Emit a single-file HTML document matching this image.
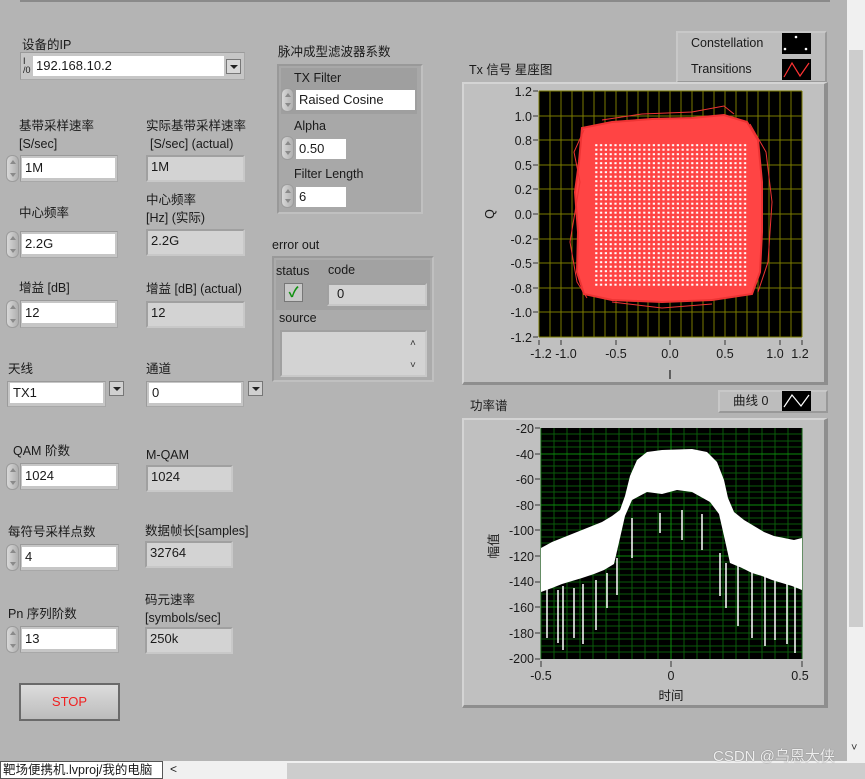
<!DOCTYPE html>
<html><head><meta charset="utf-8"><style>
*{margin:0;padding:0;box-sizing:border-box}
body{width:865px;height:779px;background:#b4b4b4;position:relative;overflow:hidden;font-family:"Liberation Sans","Noto Sans CJK SC",sans-serif;font-size:12.5px;color:#1a1a1a}
.a{position:absolute;white-space:nowrap}
.lbl{position:absolute;white-space:nowrap;line-height:16px}
.fr{position:absolute;background:#c6c6c6;border:1px solid #a8a8a8;border-top-color:#9a9a9a;border-left-color:#9a9a9a}
.in{position:absolute;background:#fff;line-height:20px;padding-left:3px;font-size:13px}
.ind{position:absolute;background:#d3d3d3;line-height:20px;padding-left:3px;font-size:13px;border-top:2px solid #a0a0a0;border-left:2px solid #a0a0a0;border-right:2px solid #c8c8c8;border-bottom:2px solid #c8c8c8}
.sp{position:absolute;width:13px;border-radius:6px;background:linear-gradient(90deg,#d8d8d8,#b0b0b0);border:1px solid #9c9c9c}
.sp:before,.sp:after{content:"";position:absolute;left:3px;border-left:3px solid transparent;border-right:3px solid transparent}
.sp:before{top:4px;border-bottom:4px solid #8a8a8a}
.sp:after{bottom:4px;border-top:4px solid #8a8a8a}
.dd{position:absolute;width:15px;height:15px;background:#d0d0d0;border:1px solid #777}
.dd:after{content:"";position:absolute;left:3px;top:5px;border-left:4px solid transparent;border-right:4px solid transparent;border-top:4px solid #222}
</style></head><body>
<div class="a" style="left:20px;top:0;width:810px;height:2px;background:#8a8a8a"></div>

<div class="lbl" style="left:22px;top:37px">设备的IP</div>
<div class="fr" style="left:20px;top:52px;width:225px;height:28px"></div>
<div class="a" style="left:23px;top:57px;font-size:9px;line-height:9px">I<br>/0</div>
<div class="in" style="left:33px;top:56px;width:191px;height:20px">192.168.10.2</div>
<div class="dd" style="left:226px;top:59px;background:#d8d8d8"></div>

<div class="lbl" style="left:19px;top:118px">基带采样速率</div>
<div class="lbl" style="left:19px;top:136px">[S/sec]</div>
<div class="sp" style="left:6px;top:155px;height:27px"></div>
<div class="fr" style="left:20px;top:155px;width:98px;height:27px"></div>
<div class="in" style="left:22px;top:158px;width:93px">1M</div>
<div class="lbl" style="left:146px;top:118px">实际基带采样速率</div>
<div class="lbl" style="left:150px;top:136px">[S/sec] (actual)</div>
<div class="ind" style="left:146px;top:155px;width:99px;height:27px">1M</div>

<div class="lbl" style="left:19px;top:205px">中心频率</div>
<div class="sp" style="left:6px;top:231px;height:27px"></div>
<div class="fr" style="left:20px;top:231px;width:98px;height:27px"></div>
<div class="in" style="left:22px;top:234px;width:93px">2.2G</div>
<div class="lbl" style="left:146px;top:192px">中心频率</div>
<div class="lbl" style="left:146px;top:210px">[Hz] (实际)</div>
<div class="ind" style="left:146px;top:229px;width:99px;height:27px">2.2G</div>

<div class="lbl" style="left:19px;top:280px">增益 [dB]</div>
<div class="sp" style="left:6px;top:300px;height:28px"></div>
<div class="fr" style="left:20px;top:300px;width:98px;height:28px"></div>
<div class="in" style="left:22px;top:303px;width:93px">12</div>
<div class="lbl" style="left:146px;top:281px">增益 [dB] (actual)</div>
<div class="ind" style="left:146px;top:301px;width:99px;height:27px">12</div>

<div class="lbl" style="left:8px;top:361px">天线</div>
<div class="fr" style="left:7px;top:381px;width:99px;height:26px"></div>
<div class="in" style="left:10px;top:383px;width:93px">TX1</div>
<div class="dd" style="left:109px;top:381px"></div>
<div class="lbl" style="left:146px;top:361px">通道</div>
<div class="fr" style="left:146px;top:381px;width:98px;height:26px"></div>
<div class="in" style="left:149px;top:383px;width:92px">0</div>
<div class="dd" style="left:248px;top:381px"></div>

<div class="lbl" style="left:13px;top:443px">QAM 阶数</div>
<div class="sp" style="left:6px;top:463px;height:27px"></div>
<div class="fr" style="left:20px;top:463px;width:99px;height:27px"></div>
<div class="in" style="left:22px;top:466px;width:94px">1024</div>
<div class="lbl" style="left:146px;top:447px">M-QAM</div>
<div class="ind" style="left:146px;top:465px;width:87px;height:27px">1024</div>

<div class="lbl" style="left:8px;top:524px">每符号采样点数</div>
<div class="sp" style="left:6px;top:544px;height:27px"></div>
<div class="fr" style="left:20px;top:544px;width:99px;height:27px"></div>
<div class="in" style="left:22px;top:547px;width:94px">4</div>
<div class="lbl" style="left:145px;top:523px">数据帧长[samples]</div>
<div class="ind" style="left:145px;top:541px;width:88px;height:27px">32764</div>

<div class="lbl" style="left:8px;top:606px">Pn 序列阶数</div>
<div class="sp" style="left:6px;top:626px;height:27px"></div>
<div class="fr" style="left:20px;top:626px;width:99px;height:27px"></div>
<div class="in" style="left:22px;top:629px;width:94px">13</div>
<div class="lbl" style="left:145px;top:592px">码元速率</div>
<div class="lbl" style="left:145px;top:610px">[symbols/sec]</div>
<div class="ind" style="left:145px;top:627px;width:88px;height:27px">250k</div>

<div class="a" style="left:19px;top:683px;width:101px;height:38px;border:2px solid #6a6a6a;background:linear-gradient(#dcdcdc,#bcbcbc);color:#f02020;text-align:center;line-height:34px;font-size:13px">STOP</div>

<div class="lbl" style="left:278px;top:44px">脉冲成型滤波器系数</div>
<div class="a" style="left:277px;top:64px;width:146px;height:150px;background:#a8a8a8;border:2px solid #c0c0c0;border-top-color:#999;border-left-color:#999"></div>
<div class="a" style="left:281px;top:68px;width:136px;height:46px;background:#9f9f9f"></div>
<div class="lbl" style="left:294px;top:70px">TX Filter</div>
<div class="sp" style="left:281px;top:88px;height:24px"></div>
<div class="in" style="left:296px;top:90px;width:119px">Raised Cosine</div>
<div class="lbl" style="left:294px;top:118px">Alpha</div>
<div class="sp" style="left:281px;top:136px;height:24px"></div>
<div class="in" style="left:296px;top:139px;width:50px">0.50</div>
<div class="lbl" style="left:294px;top:166px">Filter Length</div>
<div class="sp" style="left:281px;top:184px;height:24px"></div>
<div class="in" style="left:296px;top:187px;width:50px">6</div>

<div class="lbl" style="left:272px;top:237px">error out</div>
<div class="a" style="left:272px;top:256px;width:162px;height:126px;background:#ababab;border:2px solid #c0c0c0;border-top-color:#999;border-left-color:#999"></div>
<div class="a" style="left:276px;top:260px;width:154px;height:50px;background:#a2a2a2"></div>
<div class="lbl" style="left:276px;top:263px">status</div>
<div class="a" style="left:284px;top:283px;width:19px;height:19px;background:#c8c8c8;border:1px solid #777;color:#109010;font-size:14px;line-height:17px;text-align:center;font-weight:bold">✓</div>
<div class="lbl" style="left:328px;top:262px">code</div>
<div class="ind" style="left:327px;top:283px;width:100px;height:23px;line-height:18px;padding-left:8px">0</div>
<div class="lbl" style="left:279px;top:310px">source</div>
<div class="ind" style="left:280px;top:330px;width:147px;height:47px"></div>
<div class="a" style="left:410px;top:333px;font-size:10px;line-height:22px;color:#333">˄<br>˅</div>

<div class="lbl" style="left:469px;top:62px">Tx 信号 星座图</div>
<div class="a" style="left:676px;top:31px;width:151px;height:52px;background:#bdbdbd;border:2px solid #c8c8c8;border-right-color:#999;border-bottom-color:#999"></div>
<div class="lbl" style="left:691px;top:35px">Constellation</div>
<div class="lbl" style="left:691px;top:61px">Transitions</div>
<div class="a" style="left:782px;top:33px;width:29px;height:21px;background:#000"><svg width="29" height="21"><circle cx="14" cy="4" r="1.3" fill="#fff"/><circle cx="3" cy="16" r="1.3" fill="#fff"/><circle cx="24" cy="16" r="1.3" fill="#fff"/></svg></div>
<div class="a" style="left:782px;top:59px;width:29px;height:21px;background:#000"><svg width="29" height="21"><polyline points="2,18 10,4 18,17 27,4" fill="none" stroke="#f33" stroke-width="1.2"/></svg></div>
<div class="a" style="left:462px;top:82px;width:366px;height:303px;background:#c0c0c0;border:2px solid #d4d4d4;border-right:4px solid #8e8e8e;border-bottom:3px solid #8e8e8e"></div>
<svg class="a" style="left:462px;top:82px" width="366" height="303">
<defs>
<pattern id="dots" x="132" y="61" width="4.8" height="4.5" patternUnits="userSpaceOnUse"><rect width="4.8" height="4.5" fill="#f44"/><rect x="1.2" y="1.2" width="2.2" height="2" fill="#fff"/></pattern>
</defs>
<rect x="77" y="9" width="263" height="246" fill="#000"/>
<g stroke="#7a7a00" stroke-width="1">
<path d="M77 9V255M88 9V255M99 9V255M110 9V255M121 9V255M132 9V255M143 9V255M154 9V255M165 9V255M176 9V255M186 9V255M197 9V255M208 9V255M219 9V255M230 9V255M241 9V255M252 9V255M263 9V255M274 9V255M285 9V255M296 9V255M307 9V255M318 9V255M329 9V255M340 9V255"/>
<path d="M77 9H340M77 34H340M77 58H340M77 83H340M77 107H340M77 132H340M77 157H340M77 181H340M77 206H340M77 230H340M77 255H340"/>
</g>
<path d="M120 46L150 40L190 37L230 36L262 33L285 40L296 58L300 100L300 150L298 190L290 212L250 218L200 220L150 218L122 212L115 190L116 150L113 110L117 80Z" fill="#f44" stroke="#e33" stroke-width="2"/>
<path d="M122 48L112 70L118 100L108 160L115 200L125 216M288 42L304 70L310 120L306 180L296 210M140 38L180 32L230 30L262 24L272 32M150 220L200 226L250 222" fill="none" stroke="#e33" stroke-width="1"/>
<rect x="132" y="61" width="154" height="145" fill="url(#dots)"/>
<g font-size="12.5" fill="#1a1a1a" font-family="Liberation Sans,sans-serif" text-anchor="end">
<text x="70" y="14">1.2</text><text x="70" y="39">1.0</text><text x="70" y="63">0.8</text><text x="70" y="88">0.5</text><text x="70" y="112">0.2</text><text x="70" y="137">0.0</text><text x="70" y="162">-0.2</text><text x="70" y="186">-0.5</text><text x="70" y="211">-0.8</text><text x="70" y="235">-1.0</text><text x="70" y="260">-1.2</text>
</g>
<g stroke="#333"><path d="M71 9H76M71 34H76M71 58H76M71 83H76M71 107H76M71 132H76M71 157H76M71 181H76M71 206H76M71 230H76M71 255H76M77 258V263M99 258V263M154 258V263M208 258V263M263 258V263M318 258V263M340 258V263"/></g>
<g font-size="12.5" fill="#1a1a1a" font-family="Liberation Sans,sans-serif" text-anchor="middle">
<text x="79" y="276">-1.2</text><text x="104" y="276">-1.0</text><text x="154" y="276">-0.5</text><text x="208" y="276">0.0</text><text x="263" y="276">0.5</text><text x="313" y="276">1.0</text><text x="338" y="276">1.2</text>
<text x="208" y="297">I</text>
<text x="32" y="132" transform="rotate(-90 32 132)">Q</text>
</g>
</svg>

<div class="lbl" style="left:470px;top:398px">功率谱</div>
<div class="a" style="left:718px;top:390px;width:110px;height:23px;background:#bdbdbd;border:2px solid #c8c8c8;border-right-color:#999;border-bottom-color:#999"></div>
<div class="lbl" style="left:733px;top:393px">曲线 0</div>
<div class="a" style="left:782px;top:391px;width:29px;height:20px;background:#000"><svg width="29" height="20"><polyline points="2,16 10,4 19,15 27,4" fill="none" stroke="#fff" stroke-width="1.2"/></svg></div>
<div class="a" style="left:462px;top:418px;width:366px;height:290px;background:#c0c0c0;border:2px solid #d4d4d4;border-right:4px solid #8e8e8e;border-bottom:3px solid #8e8e8e"></div>
<svg class="a" style="left:462px;top:418px" width="366" height="290">
<rect x="79" y="10" width="261" height="231" fill="#000"/>
<g stroke="#0a5a0a" stroke-width="1">
<path d="M79 10V241M92 10V241M105 10V241M118 10V241M131 10V241M144 10V241M157 10V241M170 10V241M183 10V241M196 10V241M222 10V241M235 10V241M248 10V241M261 10V241M274 10V241M287 10V241M300 10V241M313 10V241M326 10V241M340 10V241"/>
<path d="M79 16H340M79 23H340M79 29H340M79 36H340M79 42H340M79 48H340M79 55H340M79 61H340M79 68H340M79 74H340M79 80H340M79 87H340M79 93H340M79 100H340M79 106H340M79 112H340M79 119H340M79 125H340M79 132H340M79 138H340M79 144H340M79 151H340M79 157H340M79 164H340M79 170H340M79 176H340M79 183H340M79 189H340M79 196H340M79 202H340M79 208H340M79 215H340M79 221H340M79 228H340M79 234H340"/>
</g>
<g stroke="#0c8a0c"><path d="M209 10V241M79 36H340M79 87H340M79 138H340M79 189H340"/></g>
<path d="M79 130L90 124L100 120L110 116L120 112L130 108L140 104L150 98L158 92L163 78L168 58L175 42L185 34L200 32L230 31L245 34L255 44L262 62L266 80L272 94L282 102L292 108L302 114L312 118L322 120L332 122L340 120L340 172L330 168L320 165L310 162L300 158L290 155L280 150L268 145L262 118L257 96L248 84L230 74L215 72L200 76L185 74L170 82L163 98L158 120L152 146L142 152L132 156L120 160L110 163L100 166L90 170L79 174Z" fill="#fff"/>
<g stroke="#fff" stroke-width="1.5">
<path d="M85 165V220M96 172V225M101 168V232M112 170V220M121 166V226M134 162V212M145 155V190M155 140V177M170 100V140M198 95V115M220 92V122M240 96V132M258 135V178M264 145V190M276 145V208M290 150V220M303 155V228M313 160V222M325 162V226M333 165V235"/>
</g>
<g font-size="12.5" fill="#1a1a1a" font-family="Liberation Sans,sans-serif" text-anchor="end">
<text x="72" y="15">-20</text><text x="72" y="41">-40</text><text x="72" y="66">-60</text><text x="72" y="92">-80</text><text x="72" y="117">-100</text><text x="72" y="143">-120</text><text x="72" y="168">-140</text><text x="72" y="194">-160</text><text x="72" y="220">-180</text><text x="72" y="245">-200</text>
</g>
<g stroke="#333"><path d="M73 10H78M73 36H78M73 61H78M73 87H78M73 112H78M73 138H78M73 164H78M73 189H78M73 215H78M73 241H78M79 243V249M209 243V249M340 243V249"/></g>
<g font-size="12.5" fill="#1a1a1a" font-family="Liberation Sans,sans-serif" text-anchor="middle">
<text x="79" y="262">-0.5</text><text x="209" y="262">0</text><text x="338" y="262">0.5</text>
<text x="209" y="282" font-family="Noto Sans CJK SC,sans-serif">时间</text>
<text x="36" y="128" transform="rotate(-90 36 128)" font-family="Noto Sans CJK SC,sans-serif">幅值</text>
</g>
</svg>

<div class="a" style="left:847px;top:0;width:18px;height:761px;background:#f0f0f0"></div>
<div class="a" style="left:849px;top:50px;width:14px;height:577px;background:#cdcdcd"></div>
<div class="a" style="left:851px;top:742px;font-size:11px;color:#333">˅</div>
<div class="a" style="left:0;top:761px;width:865px;height:18px;background:#f0f0f0"></div>
<div class="a" style="left:287px;top:763px;width:578px;height:16px;background:#cdcdcd"></div>
<div class="a" style="left:0;top:761px;width:163px;height:18px;background:#fff;border:1px solid #555;font-size:12.5px;line-height:16px;padding-left:2px">靶场便携机.lvproj/我的电脑</div>
<div class="a" style="left:170px;top:762px;font-size:12px">&lt;</div>
<div class="a" style="left:713px;top:745px;font-size:15px;color:#eee;text-shadow:0 0 1px #666">CSDN @乌恩大侠</div>
</body></html>
